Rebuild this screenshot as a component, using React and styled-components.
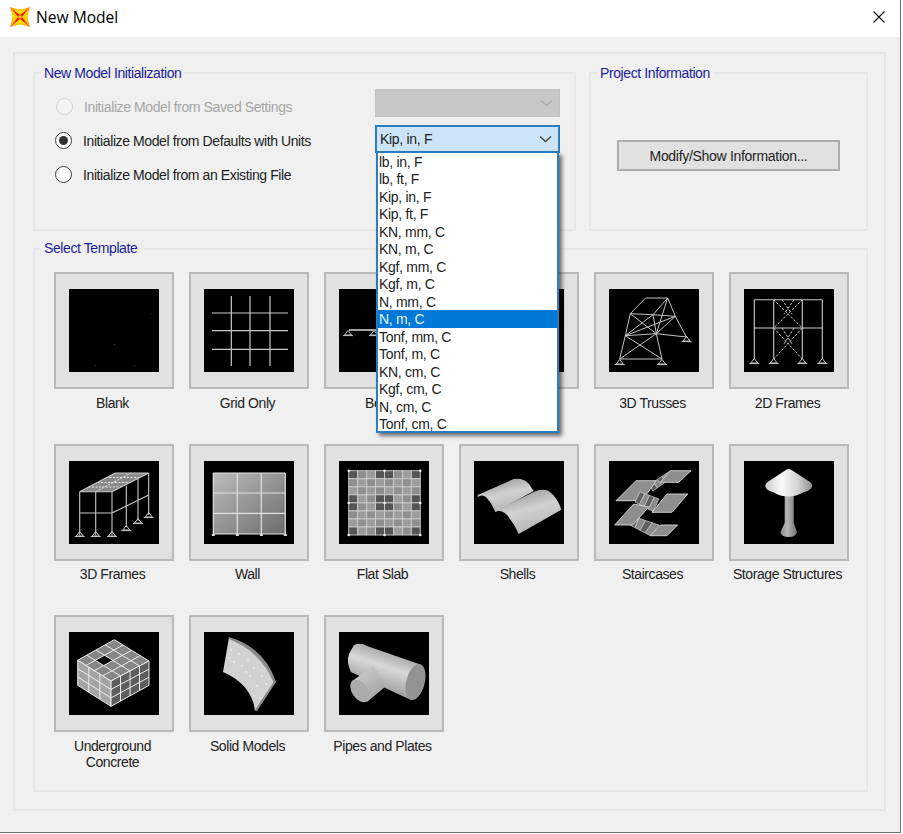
import React from "react";
import styled, { createGlobalStyle } from "styled-components";

const Global = createGlobalStyle`
  html, body { margin: 0; padding: 0; background: #fff; }
  body { font-family: "Liberation Sans", Arial, sans-serif; font-size: 14px; color: #222; }
`;

const Window = styled.div`
  box-sizing: border-box; width: 901px; height: 833px; display: flex; flex-direction: column;
  background: #f0f0f0; border-right: 1px solid #6f6f6f; border-bottom: 1px solid #6f6f6f;
`;
const TitleBar = styled.header`
  flex: none; height: 37px; background: #fff; display: flex; align-items: center; padding: 0 15px 3px 10px; box-sizing: border-box;
`;
const Title = styled.h1`
  margin: 0 0 0 6px; flex: 1; font: 400 15.6px/20px "Open Sans", "Noto Sans", sans-serif; color: #000;
`;
const WindowBody = styled.main`
  flex: 1; padding: 15px 14px 21px 13px; min-height: 0; display: flex;
`;
const Panel = styled.div`
  flex: 1; box-sizing: border-box; border: 2px solid #e6e6e6; padding: 10px 16px 0 18px; display: flex; flex-direction: column; gap: 9px;
`;
const TopRow = styled.div`
  height: 167px; display: flex; gap: 13px; flex: none;
`;
const Group = styled.fieldset`
  margin: 0; padding: 0; min-width: 0; box-sizing: border-box; border: 2px solid #e6e6e6;
  flex: ${p => p.$flex || "1"};
`;
const GroupTitle = styled.legend`
  margin-left: 6px; padding: ${p => (p.$low ? "1px" : "0")} 3px 0; font-size: 14px; line-height: 17px; color: #1b1b9e; letter-spacing: -0.4px;
`;
const InitColumns = styled.div`
  display: grid; grid-template-columns: 340px 185px;
`;
const RadioList = styled.div`
  padding: 7.5px 0 0 20px; display: flex; flex-direction: column;
`;
const RadioRow = styled.label`
  height: 34px; display: flex; align-items: center; gap: 11px;
  padding-left: ${p => (p.$disabled ? "1px" : "0")};
  color: ${p => (p.$disabled ? "#a6a6a6" : "#222")};
`;
const RadioMark = styled.span`
  flex: none; box-sizing: border-box; width: 17px; height: 17px; border-radius: 50%; display: flex; align-items: center; justify-content: center;
  background: ${p => (p.$disabled ? "#f4f4f4" : "#fff")};
  border: 1.6px solid ${p => (p.$disabled ? "#cfcfcf" : "#3c3c3c")};
  &::after {
    content: ""; width: 9px; height: 9px; border-radius: 50%;
    background: ${p => (p.$checked ? "#333" : "transparent")};
  }
`;
const RadioLabel = styled.span`
  letter-spacing: -0.4px; white-space: nowrap;
`;
const ComboColumn = styled.div`
  padding-top: 7px; display: flex; flex-direction: column; gap: 8px;
`;
const Combo = styled.div`
  position: relative; box-sizing: border-box; width: 185px; height: 28px; display: flex; align-items: center; justify-content: space-between;
  padding: 0 6px 0 3px; letter-spacing: -0.3px; color: #222;
  background: ${p => (p.$open ? "#cce4f7" : "#c8c8c8")};
  border: ${p => (p.$open ? "2px solid #2a7dc0" : "1px solid #c2c2c2")};
`;
const Chevron = styled.svg`
  width: 13px; height: 8px; fill: none; stroke: ${p => (p.$muted ? "#a8a8a8" : "#444")}; stroke-width: 1.4;
`;
const DropList = styled.ul`
  position: absolute; z-index: 5; left: -1px; right: -1px; top: 24.5px; margin: 0; padding: 0; list-style: none;
  box-sizing: border-box; height: 281.5px; background: #fff; border: 2px solid #2a7dc0; border-top-width: 1px;
  box-shadow: 3px 3px 4px rgba(0,0,0,0.55);
`;
const DropItem = styled.li`
  height: 17.5px; line-height: 18px; padding-left: 1px; white-space: nowrap; letter-spacing: -0.3px;
  background: ${p => (p.$selected ? "#0078d7" : "transparent")};
  color: ${p => (p.$selected ? "#e8f2ff" : "#222")};
`;
const ProjectBody = styled.div`
  padding-top: 58px; display: flex; justify-content: center;
`;
const ActionButton = styled.button`
  box-sizing: border-box; width: 223px; height: 31px; background: #e1e1e1; border: 2px solid #adadad; border-radius: 0; padding: 0;
  font: inherit; color: #222; letter-spacing: -0.3px;
`;
const TemplateGrid = styled.div`
  padding: 15px 0 0 19px; display: grid; grid-template-columns: repeat(6, 120px); column-gap: 15px; grid-auto-rows: 171.7px;
`;
const TemplateCell = styled.div`
  display: flex; flex-direction: column; align-items: center;
`;
const Tile = styled.div`
  box-sizing: border-box; width: 120px; height: 117px; flex: none; background: #e1e1e1; border: 2px solid #b9b9b9; display: flex; align-items: center; justify-content: center;
`;
const Thumb = styled.svg`
  width: 90px; height: 83px; display: block; background: #000;
`;
const TileLabel = styled.div`
  margin-top: 5.5px; padding-right: 3px; line-height: 16px; text-align: center; white-space: pre-line; color: #222; letter-spacing: -0.42px;
`;

const L = "#c9c9c9";
const Tri = ({ x, y, c = L }) => (
  <path d={`M${x} ${y - 4.5}L${x - 3.5} ${y}H${x + 3.5}ZM${x - 5} ${y + 0.6}H${x + 5}`} fill="none" stroke={c} strokeWidth="1" />
);
const Lines = ({ segs, w = 1, c = L, dash }) => (
  <path d={segs.map(s => `M${s[0]} ${s[1]}L${s[2]} ${s[3]}`).join("")} stroke={c} strokeWidth={w} fill="none" strokeDasharray={dash} />
);
const lerp = (a, b, t) => [a[0] + (b[0] - a[0]) * t, a[1] + (b[1] - a[1]) * t];
const quad = (a, b, c, d, u, v) => lerp(lerp(a, b, u), lerp(d, c, u), v);
const IsoFace = ({ a, b, c, d, nu, nv, fill, hole }) => {
  const segs = [];
  for (let i = 0; i <= nu; i++) { const p = quad(a, b, c, d, i / nu, 0), q = quad(a, b, c, d, i / nu, 1); segs.push([...p, ...q]); }
  for (let j = 0; j <= nv; j++) { const p = quad(a, b, c, d, 0, j / nv), q = quad(a, b, c, d, 1, j / nv); segs.push([...p, ...q]); }
  return (
    <g>
      <polygon points={[a, b, c, d].map(p => p.join(",")).join(" ")} fill={fill} />
      {hole && <polygon fill="#000" points={[[hole[0], hole[1]], [hole[0] + 1, hole[1]], [hole[0] + 1, hole[1] + 1], [hole[0], hole[1] + 1]].map(([i, j]) => quad(a, b, c, d, i / nu, j / nv).join(",")).join(" ")} />}
      <Lines segs={segs} c="#eee" />
    </g>
  );
};

const Blank = () => (
  <g fill="#2c2c2c"><rect x="82" y="24" width="1" height="1" /><rect x="45" y="55" width="1" height="1" /><rect x="26" y="76" width="1" height="1" /><rect x="65" y="76" width="1" height="1" /></g>
);
const GridOnly = () => (
  <Lines w={1.2} segs={[[27.3, 7, 27.3, 77], [46, 7, 46, 77], [66, 7, 66, 77], [8, 24, 84, 24], [8, 41.7, 84, 41.7], [8, 60.3, 84, 60.3]]} />
);
const Beam = () => (
  <g>
    <Lines w={1.6} c="#d8d8d8" segs={[[10, 41, 80, 41]]} />
    <Tri x={9} y={46} /><Tri x={35} y={46} /><Tri x={80} y={46} />
  </g>
);
const Truss2D = () => (
  <g>
    <Lines segs={[[10, 30, 80, 30], [10, 50, 80, 50], [10, 30, 10, 50], [80, 30, 80, 50], [30, 30, 30, 50], [55, 30, 55, 50], [10, 50, 30, 30], [55, 30, 80, 50]]} />
    <Tri x={10} y={55} /><Tri x={80} y={55} />
  </g>
);
const A = [36.7, 9], B = [58.7, 9], C = [21.3, 24.7], D = [44, 25.7], E = [66.3, 27.3], F = [16.3, 46.7], G = [47.3, 44.7], H = [77.3, 48], I = [10.7, 70], J = [53, 70];
const t3 = [[A, B], [A, C], [B, E], [B, D], [C, D], [D, E], [C, F], [F, G], [G, H], [E, H], [F, I], [G, J], [I, G], [F, J], [I, J], [C, G], [D, F], [D, G], [E, G], [B, G], [E, F]];
const Trusses3D = () => (
  <g>
    <Lines segs={t3.map(([p, q]) => [...p, ...q])} w={1} c="#c4c4c4" />
    <Tri x={77.5} y={52} /><Tri x={10.7} y={75} /><Tri x={53} y={75} />
  </g>
);
const Frames2D = () => (
  <g>
    <Lines w={1.1} segs={[[10.3, 10.7, 78.3, 10.7], [10.3, 39, 78.3, 39], [10.3, 10.7, 10.3, 70], [29.7, 10.7, 29.7, 70], [58.3, 10.7, 58.3, 70], [78.3, 10.7, 78.3, 70]]} />
    <Lines w={1} dash="2.5 1.5" segs={[[29.7, 10.7, 58.3, 39], [58.3, 10.7, 29.7, 39], [29.7, 39, 58.3, 70], [58.3, 39, 29.7, 70], [38, 10.7, 48, 25], [50, 10.7, 40, 25], [38, 39, 48, 55], [50, 39, 40, 55]]} />
    <Tri x={10.3} y={74} /><Tri x={29.7} y={74} /><Tri x={58.3} y={74} /><Tri x={78.3} y={74} />
  </g>
);
const Frames3D = () => (
  <g>
    <polygon points="10.7,30.7 46.3,12 79.7,12 43,30.7" fill="#8a8a8a" />
    <Lines c="#e8e8e8" dash="2 1.5" segs={[[26.7, 30.7, 62, 12], [28.5, 21.5, 61, 21.5], [19.5, 26, 52, 26], [37, 16.5, 70, 16.5]]} />
    <Lines w={1.1} segs={[[10.7, 30.7, 43, 30.7], [10.7, 52, 43, 52], [10.7, 30.7, 10.7, 74], [26.7, 30.7, 26.7, 74], [43, 30.7, 43, 74], [57.3, 24.7, 57.3, 66], [69, 18, 69, 59.7], [79.7, 12, 79.7, 54], [43, 52, 79.7, 34], [10.7, 30.7, 46.3, 12], [43, 30.7, 79.7, 12], [46.3, 12, 79.7, 12]]} />
    <Tri x={10.7} y={75} /><Tri x={26.7} y={75} /><Tri x={43} y={75} /><Tri x={57.3} y={69} /><Tri x={69} y={62} /><Tri x={79.7} y={56} />
  </g>
);
const Wall = () => (
  <g>
    <defs><linearGradient id="wallFill" x1="0" y1="0" x2="1" y2="1"><stop offset="0" stopColor="#bcbcbc" /><stop offset="1" stopColor="#6c6c6c" /></linearGradient></defs>
    <rect x="9.3" y="12" width="72" height="61" fill="url(#wallFill)" />
    <Lines w={1.2} c="#e2e2e2" segs={[[9.3, 12, 81.3, 12], [9.3, 32, 81.3, 32], [9.3, 52.3, 81.3, 52.3], [9.3, 73, 81.3, 73], [9.3, 12, 9.3, 73], [33.3, 12, 33.3, 73], [57.3, 12, 57.3, 73], [81.3, 12, 81.3, 73]]} />
    {[9.3, 33.3, 57.3, 81.3].map(x => <rect key={x} x={x - 1.5} y="73" width="3" height="2" fill="#ddd" />)}
  </g>
);
const FlatSlab = () => {
  const x0 = 9.7, y0 = 9.7, w = 71.6 / 8, h = 64.3 / 8, dark = [0, 3, 4, 7], cells = [];
  for (let r = 0; r < 8; r++) for (let c = 0; c < 8; c++) {
    const d = dark.includes(r) && dark.includes(c);
    cells.push(<rect key={`${r}-${c}`} x={x0 + c * w} y={y0 + r * h} width={w} height={h} fill={d ? "#555" : r % 2 === c % 2 ? "#9c9c9c" : "#8f8f8f"} stroke="#cfcfcf" strokeWidth="0.9" />);
  }
  return (
    <g>
      {cells}
      <g fill="#fff">{[[x0, y0], [45.5, y0], [81.3, y0], [x0, 42], [45.5, 42], [81.3, 42], [x0, 74], [45.5, 74], [81.3, 74]].map(([x, y]) => <circle key={`${x}${y}`} cx={x} cy={y} r="1.2" />)}</g>
    </g>
  );
};
const Shells = () => (
  <g>
    <defs>
      <linearGradient id="shellFill" x1="0.35" y1="0.1" x2="0.65" y2="0.85"><stop offset="0" stopColor="#a4a4a4" /><stop offset="0.45" stopColor="#d2d2d2" /><stop offset="1" stopColor="#b8b8b8" /></linearGradient>
    </defs>
    <path d="M3.7 34L39.7 18Q50 17 55 23L59.7 30L21.3 51.3Q18 42 12 36Q8 33 3.7 36Z" fill="url(#shellFill)" />
    <path d="M21.3 50L59.7 31Q68 27 74.7 30Q84 37 87.3 48.7L44.7 73Q40 62 33 54Q28 49 21.3 50Z" fill="url(#shellFill)" />
  </g>
);
const Landing = ({ pts }) => <polygon points={pts} fill="#8e8e8e" stroke="#d8d8d8" strokeWidth="0.9" />;
const Flight = ({ a, b, c, d, n }) => (
  <g>
    {Array.from({ length: n }, (_, i) => (
      <polygon key={i} fill={i % 2 ? "#8a8a8a" : "#5e5e5e"} stroke="#d0d0d0" strokeWidth="0.7"
        points={[quad(a, b, c, d, i / n, 0), quad(a, b, c, d, (i + 1) / n, 0), quad(a, b, c, d, (i + 1) / n, 1), quad(a, b, c, d, i / n, 1)].map(p => p.join(",")).join(" ")} />
    ))}
  </g>
);
const Staircases = () => (
  <g>
    <Flight a={[40, 24]} b={[61, 10]} c={[66, 14]} d={[44, 30]} n={5} />
    <Landing pts="61.3,9.7 82,9.7 69.7,21.3 51.3,21.3" />
    <Landing pts="27,19.7 47.3,19.7 33,39.7 7,39.7" />
    <Flight a={[31, 31]} b={[50, 38]} c={[44, 50.5]} d={[26, 41]} n={4} />
    <Landing pts="58,33 78.7,33 63,51.3 43,51.3" />
    <Flight a={[23, 55]} b={[50, 64]} c={[41.3, 74.7]} d={[21, 64]} n={4} />
    <Landing pts="24.7,43 39.7,46 23.7,64 5.7,64" />
    <Landing pts="51.3,64 68.7,64 58,74.7 41.3,74.7" />
  </g>
);
const Storage = () => (
  <g>
    <defs>
      <linearGradient id="coneFill" x1="0" y1="0" x2="1" y2="0"><stop offset="0" stopColor="#cdcdcd" /><stop offset="0.35" stopColor="#fafafa" /><stop offset="0.7" stopColor="#d2d2d2" /><stop offset="1" stopColor="#8f8f8f" /></linearGradient>
      <linearGradient id="stemFill" x1="0" y1="0" x2="1" y2="0"><stop offset="0" stopColor="#8e8e8e" /><stop offset="0.4" stopColor="#b6b6b6" /><stop offset="1" stopColor="#727272" /></linearGradient>
    </defs>
    <path d="M40.7 33H49.7V62L53 71Q52 76 44.7 76Q37 76 36.5 71L40.7 62Z" fill="url(#stemFill)" />
    <path d="M42 9Q44.7 7 47.5 9L66 21Q69.5 24 67.5 27Q65 30 60 31Q52 35.5 44.7 35.5Q36 35.5 29 31Q24 30 22 27Q20 24 23.5 21Z" fill="url(#coneFill)" />
  </g>
);
const Underground = () => {
  const T = [45.3, 7.7], Lf = [8.7, 28.3], Fr = [42, 49], R = [80, 29], BF = [42, 74.3], BL = [8.7, 53.3], BR = [80, 53.3];
  return (
    <g>
      <IsoFace a={T} b={R} c={Fr} d={Lf} nu={4} nv={4} fill="#868686" hole={[1, 2]} />
      <IsoFace a={Lf} b={Fr} c={BF} d={BL} nu={3} nv={3} fill="#a4a4a4" />
      <IsoFace a={Fr} b={R} c={BR} d={BF} nu={4} nv={3} fill="#5e5e5e" />
    </g>
  );
};
const Solid = () => (
  <g>
    <path d="M24.7 5Q60 15 72 50L53 79L50 78L69 49Q55 20 24.7 8Z" fill="#8a8a8a" />
    <path d="M24.7 7Q56 19 69.5 50L51 78Q47 52 19 40Z" fill="#d2d2d2" />
    <g fill="#ececec">{[[27, 18], [35, 22], [44, 28], [30, 30], [38, 34], [50, 36], [58, 44], [46, 44], [53, 54], [62, 52], [50, 64], [56, 66], [25, 26], [42, 40]].map(([x, y]) => <circle key={`${x}${y}`} cx={x} cy={y} r="0.9" />)}</g>
  </g>
);
const Pipes = () => (
  <g>
    <defs>
      <linearGradient id="pipeFill" gradientUnits="userSpaceOnUse" x1="50" y1="20" x2="38" y2="56"><stop offset="0" stopColor="#a8a8a8" /><stop offset="0.4" stopColor="#d8d8d8" /><stop offset="1" stopColor="#a0a0a0" /></linearGradient>
      <linearGradient id="stubFill" gradientUnits="userSpaceOnUse" x1="22" y1="40" x2="38" y2="62"><stop offset="0" stopColor="#c8c8c8" /><stop offset="1" stopColor="#a8a8a8" /></linearGradient>
    </defs>
    <path d="M15 13Q22 10 28 14L80 32L72 68L12 40Q7 30 10 22Z" fill="url(#pipeFill)" />
    <path d="M13 49L34.7 34L47 54L28 70Z" fill="url(#stubFill)" />
    <ellipse cx="21" cy="59" rx="8" ry="12.5" transform="rotate(-35 21 59)" fill="#acacac" />
    <ellipse cx="76.5" cy="50" rx="9.2" ry="18.5" transform="rotate(14 76.5 50)" fill="#939393" />
  </g>
);

const templates = [
  ["Blank", Blank], ["Grid Only", GridOnly], ["Beam", Beam], ["2D Trusses", Truss2D], ["3D Trusses", Trusses3D], ["2D Frames", Frames2D],
  ["3D Frames", Frames3D], ["Wall", Wall], ["Flat Slab", FlatSlab], ["Shells", Shells], ["Staircases", Staircases], ["Storage Structures", Storage],
  ["Underground\nConcrete", Underground], ["Solid Models", Solid], ["Pipes and Plates", Pipes],
];
const units = ["lb, in, F", "lb, ft, F", "Kip, in, F", "Kip, ft, F", "KN, mm, C", "KN, m, C", "Kgf, mm, C", "Kgf, m, C", "N, mm, C", "N, m, C", "Tonf, mm, C", "Tonf, m, C", "KN, cm, C", "Kgf, cm, C", "N, cm, C", "Tonf, cm, C"];

const AppLogo = () => (
  <svg width="20" height="20" viewBox="0 0 20 20" style={{ flex: "none" }}>
    <defs>
      <radialGradient id="logoFill" cx="0.5" cy="0.5" r="0.6"><stop offset="0" stopColor="#ffe000" /><stop offset="0.6" stopColor="#ffd400" /><stop offset="1" stopColor="#ff8a1e" /></radialGradient>
    </defs>
    <path d="M0 0L5 1.5Q10 3 15 1.5L20 0L18.5 5Q17 10 18.5 15L20 20L15 18.5Q10 17 5 18.5L0 20L1.5 15Q3 10 1.5 5Z" fill="url(#logoFill)" />
    <path d="M2 2L8 6.5L10 8L12 6.5L18 2L13.5 8L12 10L13.5 12L18 18L12 13.5L10 12L8 13.5L2 18L6.5 12L8 10L6.5 8Z" fill="#f01010" />
    <rect x="8.5" y="8.5" width="3" height="3" fill="#ffd800" />
  </svg>
);
const CloseIcon = () => (
  <svg width="12" height="12" viewBox="0 0 12 12" fill="none" stroke="#111" strokeWidth="1.1"><path d="M0.5 0.5L11.5 11.5M11.5 0.5L0.5 11.5" /></svg>
);
const ChevronIcon = ({ muted }) => (
  <Chevron $muted={muted} viewBox="0 0 13 8"><path d="M1 1.5L6.5 6.5L12 1.5" /></Chevron>
);

export default function App() {
  return (
    <>
      <Global />
      <Window>
        <TitleBar>
          <AppLogo />
          <Title>New Model</Title>
          <CloseIcon />
        </TitleBar>
        <WindowBody>
          <Panel>
            <TopRow>
              <Group $flex="0 0 543px">
                <GroupTitle $low>New Model Initialization</GroupTitle>
                <InitColumns>
                  <RadioList>
                    <RadioRow $disabled><RadioMark $disabled /><RadioLabel>Initialize Model from Saved Settings</RadioLabel></RadioRow>
                    <RadioRow><RadioMark $checked /><RadioLabel>Initialize Model from Defaults with Units</RadioLabel></RadioRow>
                    <RadioRow><RadioMark /><RadioLabel>Initialize Model from an Existing File</RadioLabel></RadioRow>
                  </RadioList>
                  <ComboColumn>
                    <Combo><span /><ChevronIcon muted /></Combo>
                    <Combo $open>
                      <span>Kip, in, F</span><ChevronIcon />
                      <DropList>
                        {units.map(u => <DropItem key={u} $selected={u === "N, m, C"}>{u}</DropItem>)}
                      </DropList>
                    </Combo>
                  </ComboColumn>
                </InitColumns>
              </Group>
              <Group>
                <GroupTitle $low>Project Information</GroupTitle>
                <ProjectBody><ActionButton>Modify/Show Information...</ActionButton></ProjectBody>
              </Group>
            </TopRow>
            <Group $flex="0 0 552px">
              <GroupTitle>Select Template</GroupTitle>
              <TemplateGrid>
                {templates.map(([name, Art]) => (
                  <TemplateCell key={name}>
                    <Tile><Thumb viewBox="0 0 90 83"><Art /></Thumb></Tile>
                    <TileLabel>{name}</TileLabel>
                  </TemplateCell>
                ))}
              </TemplateGrid>
            </Group>
          </Panel>
        </WindowBody>
      </Window>
    </>
  );
}
